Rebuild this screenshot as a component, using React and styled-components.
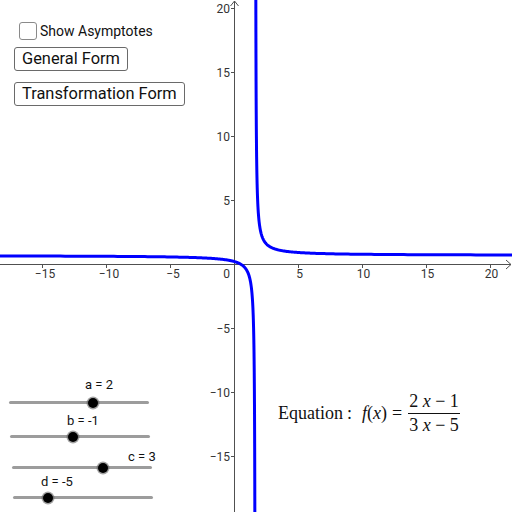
import React from "react";
import styled, { createGlobalStyle } from "styled-components";

const Global = createGlobalStyle`
  html, body { margin: 0; padding: 0; background: #ffffff; }
  body { font-family: Roboto, "Liberation Sans", sans-serif; }
`;

const X0 = 234;
const Y0 = 264;
const S = 12.8;
const f = (x) => (2 * x - 1) / (3 * x - 5);

function branch(side) {
  const pts = [];
  const N = 260;
  const dMin = 0.034;
  const dMax = 21;
  for (let i = 0; i <= N; i++) {
    const t = i / N;
    const d = Math.exp(Math.log(dMin) + (Math.log(dMax) - Math.log(dMin)) * t);
    const x = 5 / 3 + side * d;
    pts.push([X0 + x * S, Y0 - f(x) * S]);
  }
  if (side < 0) pts.reverse();
  return "M" + pts.map((p) => `${p[0].toFixed(2)},${p[1].toFixed(2)}`).join(" L");
}

const Stage = styled.div`
  position: relative;
  width: 512px;
  height: 512px;
  overflow: hidden;
  background: #ffffff;
`;

const GraphCanvas = styled.svg`
  position: absolute;
  inset: 0;
  display: block;
`;

const AxisLabel = styled.text`
  font-family: Roboto, "Liberation Sans", sans-serif;
  font-size: 12px;
  fill: #333333;
`;

const ControlPanel = styled.div`
  position: absolute;
  left: 14px;
  top: 22px;
  display: flex;
  flex-direction: column;
  align-items: flex-start;
`;

const CheckRow = styled.label`
  display: flex;
  align-items: center;
  gap: 3px;
  padding-left: 5px;
  height: 18px;
  font-size: 14px;
  color: #111;
  margin-bottom: ${(p) => p.$after}px;
`;

const CheckBox = styled.span`
  box-sizing: border-box;
  width: 18px;
  height: 18px;
  border: 1px solid #8a8a8a;
  border-radius: 3px;
  background: #fff;
`;

const FormButton = styled.button`
  box-sizing: border-box;
  height: 24px;
  padding: 0 7px;
  margin: 0 0 ${(p) => p.$after || 0}px 0;
  border: 1px solid #6a6a6a;
  border-radius: 3px;
  background: #ffffff;
  font-family: Roboto, "Liberation Sans", sans-serif;
  font-size: 16.4px;
  line-height: 22px;
  color: #111;
  white-space: nowrap;
`;

const SliderStack = styled.div`
  position: absolute;
  left: 0;
  top: 377px;
  display: flex;
  flex-direction: column;
`;

const SliderRow = styled.div`
  display: flex;
  flex-direction: column;
  margin-top: ${(p) => p.$top}px;
  margin-left: ${(p) => p.$indent}px;
  width: 140px;
  gap: ${(p) => p.$gap}px;
`;

const SliderLabel = styled.div`
  height: 16px;
  line-height: 16px;
  font-size: 13px;
  color: #111;
  padding-left: ${(p) => p.$offset}px;
  white-space: nowrap;
`;

const Track = styled.div`
  position: relative;
  height: 3px;
  border-radius: 2px;
  background: #9c9c9c;
`;

const Knob = styled.span`
  position: absolute;
  top: 50%;
  width: 10px;
  height: 10px;
  margin: -5px 0 0 -5px;
  border-radius: 50%;
  background: #000;
  box-shadow: 0 0 0 1.5px rgba(90, 90, 90, 0.55);
`;

const Equation = styled.div`
  position: absolute;
  left: 278px;
  top: 392px;
  display: flex;
  align-items: center;
  font-family: "Liberation Serif", "DejaVu Serif", serif;
  font-size: 18px;
  color: #111;
  white-space: nowrap;
`;

const Word = styled.span`
  margin-right: ${(p) => p.$gap || 0}px;
`;

const Fraction = styled.span`
  display: inline-flex;
  flex-direction: column;
  align-items: center;
`;

const FracPart = styled.span`
  line-height: 19px;
  padding: 0 1px;
`;

const FracBar = styled.span`
  align-self: stretch;
  height: 1px;
  background: #111;
  margin: 2px 0;
`;

const I = styled.i`
  font-style: italic;
`;

const sliders = [
  { name: "a", value: 2, top: 0, indent: 9, gap: 8, offset: 76 },
  { name: "b", value: -1, top: 9, indent: 10, gap: 6, offset: 57 },
  { name: "c", value: 3, top: 11, indent: 12, gap: 1, offset: 116 },
  { name: "d", value: -5, top: 5, indent: 13, gap: 6, offset: 28 },
];

const xTicks = [-15, -10, -5, 5, 10, 15, 20];
const yTicks = [20, 15, 10, 5, -5, -10, -15];
const fmt = (n) => (n < 0 ? "\u2212" + Math.abs(n) : String(n));

export default function App() {
  const left = branch(-1);
  const right = branch(1);
  return (
    <>
      <Global />
      <Stage>
        <GraphCanvas width="512" height="512" viewBox="0 0 512 512">
          <g stroke="#505050" strokeWidth="1" fill="none">
            <line x1="0" y1={Y0 + 0.5} x2="511" y2={Y0 + 0.5} />
            <line x1={X0 + 0.5} y1="512" x2={X0 + 0.5} y2="1" />
            <polyline points={`${X0 - 3.5},6 ${X0 + 0.5},1 ${X0 + 4.5},6`} />
            <polyline points={`506,${Y0 - 4} 511,${Y0 + 0.5} 506,${Y0 + 5}`} />
            {xTicks.map((t) => (
              <line key={t} x1={X0 + t * S + 0.5} y1={Y0} x2={X0 + t * S + 0.5} y2={Y0 + 4} />
            ))}
            {yTicks.map((t) => (
              <line key={t} x1={X0 - 3} y1={Y0 - t * S + 0.5} x2={X0} y2={Y0 - t * S + 0.5} />
            ))}
          </g>
          {xTicks.map((t) => (
            <AxisLabel key={t} x={X0 + t * S + (t < 0 ? 3 : 1.5)} y={Y0 + 14} textAnchor="middle">
              {fmt(t)}
            </AxisLabel>
          ))}
          {yTicks.map((t) => (
            <AxisLabel key={t} x={X0 - 4} y={Y0 - t * S + 4.5} textAnchor="end">
              {fmt(t)}
            </AxisLabel>
          ))}
          <AxisLabel x={X0 - 4} y={Y0 + 14} textAnchor="end">0</AxisLabel>
          <g stroke="#0000ff" strokeWidth="3" fill="none" strokeLinejoin="round">
            <path d={left} />
            <path d={right} />
          </g>
        </GraphCanvas>

        <ControlPanel>
          <CheckRow $after={7}>
            <CheckBox />
            Show Asymptotes
          </CheckRow>
          <FormButton $after={11}>General Form</FormButton>
          <FormButton>Transformation Form</FormButton>
        </ControlPanel>

        <SliderStack>
          {sliders.map((s) => (
            <SliderRow key={s.name} $top={s.top} $indent={s.indent} $gap={s.gap}>
              <SliderLabel $offset={s.offset}>
                {s.name} = {s.value}
              </SliderLabel>
              <Track>
                <Knob style={{ left: `${((s.value + 10) / 20) * 100}%` }} />
              </Track>
            </SliderRow>
          ))}
        </SliderStack>

        <Equation>
          <Word $gap={4}>Equation</Word>
          <Word $gap={10}>:</Word>
          <Word $gap={5}>
            <I>f</I>(<I>x</I>)
          </Word>
          <Word $gap={6}>=</Word>
          <Fraction>
            <FracPart>
              2 <I>x</I> − 1
            </FracPart>
            <FracBar />
            <FracPart>
              3 <I>x</I> − 5
            </FracPart>
          </Fraction>
        </Equation>
      </Stage>
    </>
  );
}
